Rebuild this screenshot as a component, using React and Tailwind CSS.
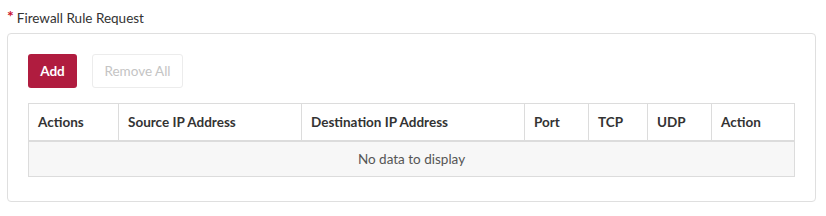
import React from "react"

const columns = [
	{ label: "Actions", width: "w-[90px]" },
	{ label: "Source IP Address", width: "w-[183px]" },
	{ label: "Destination IP Address", width: "w-[223px]" },
	{ label: "Port", width: "w-[64px]" },
	{ label: "TCP", width: "w-[59px]" },
	{ label: "UDP", width: "w-[64px]" },
	{ label: "Action", width: "" },
]

function FirewallRuleRequest() {
	return (
		<div className="px-[7px] pt-[9px] font-['Lato',sans-serif] text-[13.5px] text-[#333]">
			<div className="flex items-start h-[24px] leading-[18px]">
				<span className="text-[#c8102e] text-[16px] font-bold mr-[3px] leading-[14px]">*</span>
				<span>Firewall Rule Request</span>
			</div>
			<div className="w-[809px] h-[169px] border border-[#dfdfdf] rounded-[4px] px-[20px] pt-[20px]">
				<div className="flex gap-[15px]">
					<button className="h-[34px] w-[49px] rounded-[3px] bg-[#b01c3f] text-white font-bold text-[13.5px]">
						Add
					</button>
					<button
						disabled
						className="h-[34px] w-[91px] rounded-[3px] border border-[#ececec] bg-white text-[#c4c4c4] text-[13.5px]"
					>
						Remove All
					</button>
				</div>
				<table className="mt-[15px] w-[767px] border-collapse table-fixed">
					<thead>
						<tr className="h-[37px]">
							{columns.map((c) => (
								<th
									key={c.label}
									className={`${c.width} border border-[#dcdcdc] border-b-2 px-[9px] text-left font-bold text-[13.5px] text-[#333]`}
								>
									{c.label}
								</th>
							))}
						</tr>
					</thead>
					<tbody>
						<tr className="h-[36px] bg-[#f7f7f7]">
							<td colSpan={7} className="border border-[#dcdcdc] text-center text-[#555]">
								No data to display
							</td>
						</tr>
					</tbody>
				</table>
			</div>
		</div>
	)
}

export default function App() {
	return (
		<div className="w-[826px] h-[216px] bg-white">
			<FirewallRuleRequest />
		</div>
	)
}
